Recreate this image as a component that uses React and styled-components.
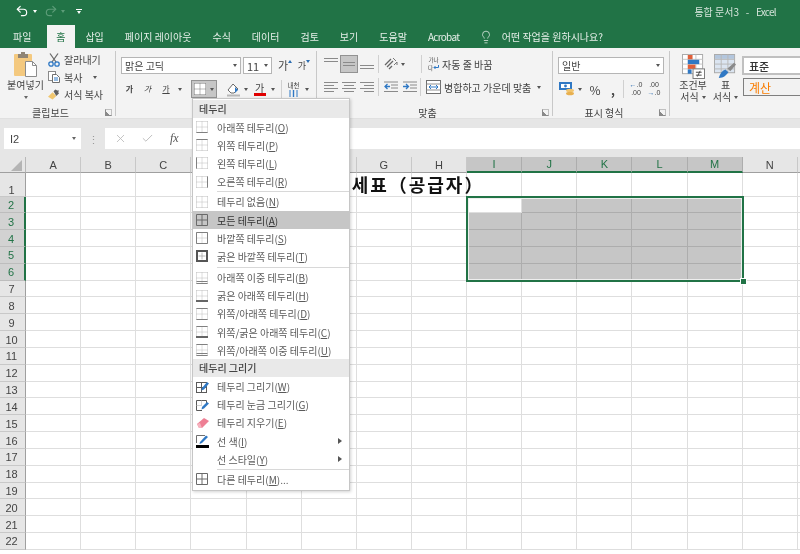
import React from "react";
import styled, { createGlobalStyle } from "styled-components";
import { Undo2, Redo2, Lightbulb, X, Check } from "lucide-react";

const GREEN = "#217346";
const KR = `"Noto Sans CJK KR", "Noto Sans", sans-serif`;

const Global = createGlobalStyle`
  html, body { margin: 0; padding: 0; background: #fff; }
  * { box-sizing: border-box; }
`;

const Page = styled.div`
  position: relative;
  width: 800px;
  height: 554px;
  overflow: hidden;
  display: flex;
  flex-direction: column;
  font-family: ${KR};
  font-size: 10px;
  color: #444;
  background: #e6e6e6;
  filter: blur(0.35px);
`;

/* title bar */
const TitleBar = styled.div`
  height: 25px;
  flex: none;
  background: ${GREEN};
  display: flex;
  align-items: center;
  padding: 0 24px 3px 15px;
  color: #d5e4da;
`;
const Qat = styled.div`
  display: flex;
  align-items: center;
  color: ${(p) => (p.$faded ? "#5c9c78" : "#fff")};
  margin-left: ${(p) => p.$ml || 0}px;
`;
const Caret = styled.span`
  display: inline-block;
  flex: none;
  width: 0;
  height: 0;
  margin-left: ${(p) => p.$ml || 0}px;
  margin-top: ${(p) => p.$mt || 0}px;
  border-left: 2.5px solid transparent;
  border-right: 2.5px solid transparent;
  border-top: 3px solid ${(p) => p.$color || "#555"};
`;
const Customize = styled.span`
  display: flex;
  flex-direction: column;
  align-items: center;
  gap: 1px;
  &::before {
    content: "";
    width: 6px;
    height: 1px;
    background: #fff;
  }
`;
const DocTitle = styled.div`
  margin-left: auto;
  white-space: pre;
`;
const Latin = styled.span`
  letter-spacing: -0.7px;
`;

/* tabs */
const TabBar = styled.div`
  height: 23px;
  flex: none;
  background: ${GREEN};
  display: flex;
  padding-left: 2.5px;
  color: #e6efe9;
`;
const Tab = styled.div`
  height: 23px;
  line-height: 23px;
  padding: 0 ${(p) => (p.$active ? 9.4 : 10.5)}px;
  margin-left: ${(p) => p.$ml || 0}px;
  white-space: nowrap;
  background: ${(p) => (p.$active ? "#f3f3f3" : "transparent")};
  color: ${(p) => (p.$active ? GREEN : "inherit")};
`;
const TellMe = styled.div`
  display: flex;
  align-items: center;
  gap: 9px;
  margin-left: 9px;
`;

/* ribbon */
const Ribbon = styled.div`
  height: 71px;
  flex: none;
  background: #f3f3f3;
  display: flex;
  padding-top: 3px;
  border-bottom: 1px solid #e0e0e0;
`;
const Group = styled.section`
  width: ${(p) => p.$w}px;
  height: 65px;
  flex: none;
  display: flex;
  flex-direction: column;
  border-right: ${(p) => (p.$last ? "none" : "1px solid #c8c8c8")};
`;
const GroupBody = styled.div`
  flex: 1;
  min-height: 0;
  display: ${(p) => (p.$row ? "flex" : "block")};
  padding: ${(p) => p.$pad || "6px 0 0 5px"};
`;
const GroupFoot = styled.div`
  display: flex;
  align-items: center;
  height: 14px;
  margin-bottom: -3px;
  flex: none;
`;
const GroupLabel = styled.div`
  flex: 1;
  text-align: center;
  white-space: nowrap;
`;
const Launcher = styled.span`
  width: 7px;
  height: 7px;
  margin: 1px 3px 0 4px;
  flex: none;
  border-left: 1px solid #8a8a8a;
  border-bottom: 1px solid #8a8a8a;
  border-top: 1px solid #c0c0c0;
  border-right: 1px solid #c0c0c0;
  background: linear-gradient(45deg, #8a8a8a 0 35%, transparent 35%);
`;
const Row = styled.div`
  display: flex;
  align-items: center;
  height: ${(p) => p.$h || 18}px;
  margin-top: ${(p) => p.$mt || 0}px;
`;
const Btn = styled.div`
  flex: none;
  display: flex;
  align-items: center;
  justify-content: center;
  height: 18px;
  width: ${(p) => p.$w}px;
  margin-left: ${(p) => p.$ml || 0}px;
  ${(p) => p.$on && `background: #c6c6c6; border: 1px solid #929292;`}
`;
const TextBtn = styled(Btn)`
  justify-content: flex-start;
  white-space: nowrap;
`;
const SymbolBtn = styled(Btn)`
  font-size: 12px;
  font-weight: ${(p) => (p.$bold ? 700 : 400)};
`;
const Sep = styled.span`
  flex: none;
  width: 1px;
  height: 18px;
  background: #d0d0d0;
  margin: 0 ${(p) => p.$r ?? p.$m ?? 3}px 0 ${(p) => p.$m ?? 3}px;
`;
const Select = styled.div`
  flex: none;
  width: ${(p) => p.$w}px;
  height: 17px;
  margin-left: ${(p) => p.$ml || 0}px;
  padding: 0 3px;
  display: flex;
  align-items: center;
  justify-content: space-between;
  background: #fff;
  border: 1px solid #b5b5b5;
  font-size: ${(p) => p.$size || 10}px;
`;
const Glyph = styled.span`
  font-size: ${(p) => p.$size || 8}px;
  font-weight: ${(p) => (p.$bold ? 700 : 400)};
  font-style: ${(p) => (p.$italic ? "italic" : "normal")};
  text-decoration: ${(p) => (p.$under ? "underline" : "none")};
  line-height: 1;
`;
const Tri = styled.span`
  align-self: flex-start;
  margin: 3px 0 0 0;
  width: 0;
  height: 0;
  border-left: 2px solid transparent;
  border-right: 2px solid transparent;
  ${(p) =>
    p.$down
      ? `border-top: 3px solid #2b6cb0;`
      : `border-bottom: 3px solid #2b6cb0;`}
`;
const FontColor = styled.span`
  display: flex;
  flex-direction: column;
  align-items: center;
  font-size: 10px;
  line-height: 11px;
  &::after {
    content: "";
    width: 12px;
    height: 3px;
    background: #e00000;
  }
`;
const Stack = styled.span`
  display: flex;
  flex-direction: column;
  align-items: center;
  font-size: ${(p) => p.$size || 7}px;
  line-height: ${(p) => p.$line || 8}px;
  white-space: nowrap;
`;
const Decimals = styled(Stack)`
  font-family: "Liberation Sans", sans-serif;
`;
const Blue = styled.span`
  color: #2b6cb0;
`;

/* clipboard */
const Paste = styled.div`
  width: 45px;
  flex: none;
  display: flex;
  flex-direction: column;
  align-items: center;
`;
const PasteLabel = styled.div`
  margin-top: 1px;
  line-height: 12px;
  white-space: nowrap;
`;
const ClipList = styled.div`
  display: flex;
  flex-direction: column;
`;
const ClipItem = styled.div`
  display: flex;
  align-items: center;
  height: 17.5px;
  gap: 4px;
  white-space: nowrap;
`;
const ClipIcon = styled.span`
  display: flex;
  width: 12px;
  justify-content: center;
`;

/* styles group */
const StyleTool = styled.div`
  width: ${(p) => p.$w}px;
  flex: none;
  display: flex;
  flex-direction: column;
  align-items: center;
  line-height: 12px;
  white-space: nowrap;
`;
const StyleIcon = styled.span`
  display: flex;
  height: 25px;
`;
const StyleLabel = styled.div`
  text-align: center;
  display: flex;
  align-items: center;
  gap: 3px;
`;
const Gallery = styled.div`
  flex: 1;
  display: flex;
  flex-direction: column;
  gap: 3px;
  padding-top: 2px;
`;
const StyleCell = styled.div`
  height: ${(p) => (p.$calc ? 18 : 19)}px;
  padding-left: 5px;
  display: flex;
  align-items: center;
  background: ${(p) => (p.$calc ? "#f2f2f2" : "#fff")};
  color: ${(p) => (p.$calc ? "#fa7d00" : "#333")};
  font-size: ${(p) => (p.$calc ? 12 : 11)}px;
  font-weight: ${(p) => (p.$calc ? 400 : 500)};
  border: ${(p) => (p.$calc ? "1px solid #7f7f7f" : "2px solid #c0c0c0")};
  border-right: none;
  margin-left: ${(p) => (p.$calc ? 1 : 0)}px;
`;

/* formula bar */
const Strip = styled.div`
  height: ${(p) => p.$h}px;
  flex: none;
`;
const FormulaBar = styled.div`
  height: 21px;
  flex: none;
  display: flex;
  padding-left: 4px;
`;
const NameBox = styled.div`
  width: 77px;
  flex: none;
  display: flex;
  align-items: center;
  justify-content: space-between;
  padding: 0 5px 0 6px;
  background: #fff;
  font: 11px "Liberation Sans", sans-serif;
  color: #444;
`;
const Grip = styled.div`
  width: 24px;
  flex: none;
  display: flex;
  justify-content: center;
  align-items: center;
  color: #9a9a9a;
  font-size: 11px;
`;
const FormulaInput = styled.div`
  flex: 1;
  display: flex;
  align-items: center;
  background: #fff;
  padding-left: 9px;
  gap: 14px;
  color: #bcbcbc;
`;
const Fx = styled.span`
  font: italic 12px "Liberation Serif", serif;
  color: #555;
  margin-left: 2px;
`;

/* sheet */
const Sheet = styled.div`
  position: relative;
  flex: 1;
  min-height: 0;
  overflow: hidden;
  background: #fff;
  display: grid;
  grid-template-columns: 26px repeat(15, 55.14px);
  grid-template-rows: 16px 23.5px repeat(22, 16.83px);
  font: 11px "Liberation Sans", sans-serif;
`;
const Corner = styled.div`
  background: #e6e6e6;
  border-right: 1px solid #b8b8b8;
  border-bottom: 1px solid #9f9f9f;
  display: flex;
  justify-content: flex-end;
  align-items: flex-end;
  padding: 0 2px 1px 0;
`;
const ColHead = styled.div`
  display: flex;
  align-items: center;
  justify-content: center;
  background: ${(p) => (p.$on ? "#c6c6c6" : "#e6e6e6")};
  color: ${(p) => (p.$on ? GREEN : "#444")};
  border-right: 1px solid ${(p) => (p.$on ? "#adadad" : "#c8c8c8")};
  border-bottom: ${(p) => (p.$on ? `2px solid ${GREEN}` : "1px solid #9f9f9f")};
`;
const RowHead = styled.div`
  display: flex;
  align-items: ${(p) => (p.$tall ? "flex-end" : "center")};
  justify-content: center;
  background: ${(p) => (p.$on ? "#d2d2d2" : "#e6e6e6")};
  color: ${(p) => (p.$on ? GREEN : "#444")};
  border-right: ${(p) => (p.$on ? `2px solid ${GREEN}` : "1px solid #9f9f9f")};
  border-bottom: 1px solid ${(p) => (p.$on ? "#bdbdbd" : "#c8c8c8")};
  padding: 1px 2px 0 0;
`;
const Cell = styled.div`
  background: ${(p) => (p.$on ? "#c6c6c6" : "#fff")};
  border-right: 1px solid ${(p) => (p.$on ? "#adadad" : "#dedede")};
  border-bottom: 1px solid ${(p) => (p.$on ? "#adadad" : "#dedede")};
`;
const Selection = styled.div`
  position: absolute;
  grid-column: 10 / 15;
  grid-row: 3 / 8;
  inset: -1px -1px -1px -1px;
  border: 2px solid ${GREEN};
  box-shadow: inset 0 0 0 1px #eee;
  pointer-events: none;
`;
const FillHandle = styled.span`
  position: absolute;
  right: -4px;
  bottom: -4px;
  width: 5px;
  height: 5px;
  background: ${GREEN};
  outline: 1px solid #fff;
`;
const SheetTitle = styled.div`
  position: absolute;
  grid-column: 7 / 11;
  grid-row: 2;
  left: 50px;
  top: 0;
  white-space: nowrap;
  font: 700 18px/22px ${KR};
  letter-spacing: 2px;
  color: #111;
`;

/* border dropdown */
const Menu = styled.div`
  position: absolute;
  left: 192px;
  top: 98px;
  width: 158px;
  height: 393px;
  padding-top: 1px;
  background: #fff;
  border: 1px solid #c6c6c6;
  box-shadow: 1px 1px 3px rgba(0, 0, 0, 0.18);
  color: #5a5a5a;
`;
const MenuHeader = styled.div`
  height: 18px;
  line-height: 17px;
  padding-left: 6px;
  background: #e9e9e9;
  font-weight: 500;
  color: #444;
`;
const MenuItem = styled.div`
  height: 18.2px;
  display: flex;
  align-items: center;
  background: ${(p) => (p.$on ? "#c6c6c6" : "transparent")};
  color: ${(p) => (p.$on ? "#333" : "inherit")};
  white-space: nowrap;
`;
const MenuIcon = styled.span`
  width: 24px;
  flex: none;
  display: flex;
  padding-left: 3px;
`;
const MenuText = styled.span`
  flex: 1;
`;
const SubArrow = styled.span`
  margin-right: 7px;
  width: 0;
  height: 0;
  border-top: 3px solid transparent;
  border-bottom: 3px solid transparent;
  border-left: 4px solid #555;
`;
const MenuRule = styled.div`
  height: ${(p) => p.$h}px;
  margin-left: 24px;
  display: flex;
  align-items: center;
  &::after {
    content: "";
    flex: 1;
    height: 1px;
    background: #d8d8d8;
  }
`;

/* icons */
const solidLines = {
  bottom: [[0.5, 11.5, 11.5, 11.5]],
  top: [[0.5, 0.5, 11.5, 0.5]],
  left: [[0.5, 0.5, 0.5, 11.5]],
  right: [[11.5, 0.5, 11.5, 11.5]],
  none: [],
  outside: [
    [0.5, 0.5, 11.5, 0.5],
    [0.5, 11.5, 11.5, 11.5],
    [0.5, 0.5, 0.5, 11.5],
    [11.5, 0.5, 11.5, 11.5],
  ],
  doubleBottom: [
    [0.5, 9.5, 11.5, 9.5],
    [0.5, 11.5, 11.5, 11.5],
  ],
  topBottom: [
    [0.5, 0.5, 11.5, 0.5],
    [0.5, 11.5, 11.5, 11.5],
  ],
  topDouble: [
    [0.5, 0.5, 11.5, 0.5],
    [0.5, 9.5, 11.5, 9.5],
    [0.5, 11.5, 11.5, 11.5],
  ],
};

const BorderIcon = ({ kind, filled }) => {
  const all = kind === "all";
  const thick = kind === "thick";
  const thickBottom = kind === "thickBottom" || kind === "topThick";
  const dots = ["M.5 .5H11.5", "M.5 6H11.5", "M.5 11.5H11.5", "M.5 .5V11.5", "M6 .5V11.5", "M11.5 .5V11.5"];
  return (
    <svg width="12" height="12" viewBox="0 0 12 12" fill="none">
      {filled && <rect width="12" height="12" fill="#fff" />}
      {!all && dots.map((d) => <path key={d} d={d} stroke={filled ? "#777" : "#bdbdbd"} strokeDasharray="1 1" />)}
      {all && dots.map((d) => <path key={d} d={d} stroke="#6a6a6a" />)}
      {(solidLines[kind] || []).map((l) => (
        <line key={l.join()} x1={l[0]} y1={l[1]} x2={l[2]} y2={l[3]} stroke="#808080" />
      ))}
      {thick && <rect x="1" y="1" width="10" height="10" stroke="#555" strokeWidth="2" />}
      {kind === "thick" && <path d="M6 3.5V8.5M3.5 6H8.5" stroke="#a6a6a6" strokeDasharray="1 1" />}
      {thickBottom && <path d="M0 11H12" stroke="#666" strokeWidth="2" />}
      {kind === "topThick" && <path d="M.5 .5H11.5" stroke="#808080" />}
    </svg>
  );
};

const Lines = ({ rows }) => (
  <svg width="14" height="16" viewBox="0 0 14 16" fill="none">
    {rows.map(([y, x1, x2]) => (
      <path key={y} d={`M${x1} ${y}H${x2}`} stroke="#8a8a8a" />
    ))}
  </svg>
);

const PasteIcon = () => (
  <svg width="24" height="27" viewBox="0 0 24 27">
    <rect x="0" y="3" width="18" height="22" rx="1" fill="#f4c97f" />
    <path d="M4 3h3V1h4v2h3v4H4z" fill="#8f8474" />
    <path d="M11.5 10.5h7l4 4v11h-11z" fill="#fff" stroke="#8c8c8c" />
    <path d="M18.5 10.5v4h4" fill="none" stroke="#8c8c8c" />
  </svg>
);
const ScissorsIcon = () => (
  <svg width="12" height="14" viewBox="0 0 12 14" fill="none">
    <path d="M2 .5L8 9M10 .5L4 9" stroke="#6b6b6b" strokeWidth="1.3" />
    <circle cx="3" cy="11" r="2.2" stroke="#2f78c4" strokeWidth="1.3" />
    <circle cx="9" cy="11" r="2.2" stroke="#2f78c4" strokeWidth="1.3" />
  </svg>
);
const CopyIcon = () => (
  <svg width="12" height="12" viewBox="0 0 12 12" fill="none">
    <rect x=".5" y=".5" width="7" height="9" fill="#fff" stroke="#8a8a8a" />
    <path d="M4.5 3.5h4l3 3v5h-7z" fill="#fff" stroke="#6f6f6f" />
    <path d="M6 7h4M6 9h4" stroke="#2f78c4" />
  </svg>
);
const PainterIcon = () => (
  <svg width="13" height="12" viewBox="0 0 13 12">
    <path d="M0 8L5 3l4 4-4 4z" fill="#f0c66e" />
    <path d="M6 2l2-2 2 1 2 0-1 2 1 1-3 3z" fill="#5f5f5f" />
  </svg>
);
const FillIcon = () => (
  <svg width="15" height="15" viewBox="0 0 15 15" fill="none">
    <path d="M2 8L7 2l5 5-4 4H5z" fill="#fff" stroke="#6b6b6b" />
    <path d="M9 5l3 3-3 3z" fill="#2f78c4" />
    <path d="M1 13.5H14" stroke="#b8b8b8" strokeWidth="2" />
  </svg>
);
const OrientIcon = () => (
  <svg width="14" height="14" viewBox="0 0 14 14" fill="none">
    <path d="M1 8L7 2M3 10L9 4M5 12L8 9" stroke="#666" strokeWidth="1.3" />
    <path d="M9 1l3 3M10 8l3-3M13 5v3" stroke="#777" />
  </svg>
);
const IndentIcon = ({ flip }) => (
  <svg width="14" height="12" viewBox="0 0 14 12" fill="none">
    <path d="M0 1H14M7 4H14M7 7H14M0 10.5H14" stroke="#8a8a8a" />
    {flip ? (
      <path d="M0 5.5H5M3 3L5.5 5.5L3 8" stroke="#2f78c4" strokeWidth="1.3" />
    ) : (
      <path d="M6 5.5H1M3.5 3L1 5.5L3.5 8" stroke="#2f78c4" strokeWidth="1.3" />
    )}
  </svg>
);
const MergeIcon = () => (
  <svg width="15" height="14" viewBox="0 0 15 14" fill="none">
    <rect x=".5" y=".5" width="14" height="13" fill="#fff" stroke="#6f6f6f" />
    <path d="M.5 4H14.5M.5 10H14.5" stroke="#8f8f8f" />
    <path d="M3 7H12M5 5L3 7L5 9M10 5L12 7L10 9" stroke="#2f78c4" />
  </svg>
);
const CurrencyIcon = () => (
  <svg width="16" height="14" viewBox="0 0 16 14">
    <rect x="0" y="0" width="13" height="8" fill="#2f78c4" />
    <rect x="2" y="2" width="9" height="4" fill="#fff" />
    <circle cx="6.5" cy="4" r="1.4" fill="#2f78c4" />
    <ellipse cx="11" cy="8.5" rx="4" ry="1.8" fill="#f2c46d" />
    <ellipse cx="11" cy="11.5" rx="4" ry="1.8" fill="#e8b04f" />
  </svg>
);
const WrapArrow = () => (
  <svg width="6" height="5" viewBox="0 0 6 5" fill="none">
    <path d="M5.5 0V2.5H1M2.5 1L1 2.5L2.5 4" stroke="#2f78c4" />
  </svg>
);
const IndentColumns = () => (
  <svg width="9" height="7" viewBox="0 0 9 7" fill="none">
    <path d="M1 0V7M8 0V7" stroke="#2f78c4" />
    <path d="M4.5 0V7" stroke="#2f78c4" strokeWidth="1.4" />
  </svg>
);
const CondFormatIcon = () => (
  <svg width="23" height="25" viewBox="0 0 24 26" fill="none">
    <rect x=".5" y=".5" width="21" height="20" fill="#fff" stroke="#a8a8a8" />
    <path d="M.5 5.5H21.5M.5 10.5H21.5M.5 15.5H21.5M7.500 .5V20.5M14.500 .5V20.5" stroke="#c4c4c4" />
    <rect x="6" y="1" width="5" height="4.5" fill="#e0603a" />
    <rect x="6" y="6" width="12" height="4.5" fill="#2f78c4" />
    <rect x="6" y="11" width="8" height="4.5" fill="#e0603a" />
    <rect x="6" y="16" width="4" height="4.5" fill="#2f78c4" />
    <rect x="11.5" y="15.5" width="12" height="10" fill="#fff" stroke="#777" />
    <path d="M14.5 19H20.5M14.5 22H20.5M19 17.5L16 23.5" stroke="#444" />
  </svg>
);
const TableFormatIcon = () => (
  <svg width="23" height="25" viewBox="0 0 24 26" fill="none">
    <rect x=".5" y=".5" width="21" height="19" fill="#dbe5f1" stroke="#a8a8a8" />
    <rect x="1" y="1" width="20" height="4" fill="#b3c6dd" />
    <path d="M.5 5.5H21.5M.5 10.5H21.5M.5 15.5H21.5M7.5 .5V20M14.5 .5V20" stroke="#b8b8b8" />
    <path d="M5 25c1-5 4-8 7-9l3 3c-2 3-5 6-10 6z" fill="#2f78c4" />
    <path d="M14 15l7-6 2 2-6 7z" fill="#8a8a8a" />
  </svg>
);
const PenGridIcon = () => (
  <svg width="14" height="14" viewBox="0 0 14 14" fill="none">
    <rect x=".5" y="2.5" width="10" height="10" stroke="#5a5a5a" />
    <path d="M.5 7.5H10.5M5.5 2.5V12.5" stroke="#5a5a5a" />
    <path d="M6 8L11 2l2 1.5-5 6-2.5 1z" fill="#2f78c4" />
  </svg>
);
const PenDashIcon = () => (
  <svg width="14" height="14" viewBox="0 0 14 14" fill="none">
    <path d="M.5 2.5H10.5V7M.5 2.5V12.5H6" stroke="#5a5a5a" />
    <path d="M.5 7.5H6M5.5 2.5V7" stroke="#a6a6a6" strokeDasharray="1 1" />
    <path d="M6 9L11 4l2 1.5-5 5-2.5 1z" fill="#2f78c4" />
  </svg>
);
const EraserIcon = () => (
  <svg width="14" height="12" viewBox="0 0 14 12">
    <path d="M1 7L8 1l5 3-7 7H3z" fill="#ee7f94" />
    <path d="M1 7l2 4h3L4 6z" fill="#f6b3bf" />
  </svg>
);
const LineColorIcon = () => (
  <svg width="14" height="14" viewBox="0 0 14 14" fill="none">
    <path d="M.5 9V1.5H9" stroke="#6f6f6f" />
    <path d="M4 8L10 1.5l2 1.5-6 6-2.5 1z" fill="#2f78c4" />
    <rect x="0" y="11" width="13" height="3" fill="#000" />
  </svg>
);
const CornerTriangle = () => (
  <svg width="12" height="11" viewBox="0 0 12 11">
    <path d="M11 0V11H0z" fill="#b4b4b4" />
  </svg>
);

const MENU = [
  { header: "테두리" },
  { label: "아래쪽 테두리", key: "O", icon: "bottom" },
  { label: "위쪽 테두리", key: "P", icon: "top" },
  { label: "왼쪽 테두리", key: "L", icon: "left" },
  { label: "오른쪽 테두리", key: "R", icon: "right" },
  { rule: 2 },
  { label: "테두리 없음", key: "N", icon: "none" },
  { label: "모든 테두리", key: "A", icon: "all", on: true },
  { label: "바깥쪽 테두리", key: "S", icon: "outside" },
  { label: "굵은 바깥쪽 테두리", key: "T", icon: "thick" },
  { rule: 3 },
  { label: "아래쪽 이중 테두리", key: "B", icon: "doubleBottom" },
  { label: "굵은 아래쪽 테두리", key: "H", icon: "thickBottom" },
  { label: "위쪽/아래쪽 테두리", key: "D", icon: "topBottom" },
  { label: "위쪽/굵은 아래쪽 테두리", key: "C", icon: "topThick" },
  { label: "위쪽/아래쪽 이중 테두리", key: "U", icon: "topDouble" },
  { header: "테두리 그리기" },
  { label: "테두리 그리기", key: "W", draw: <PenGridIcon /> },
  { label: "테두리 눈금 그리기", key: "G", draw: <PenDashIcon /> },
  { label: "테두리 지우기", key: "E", draw: <EraserIcon /> },
  { label: "선 색", key: "I", draw: <LineColorIcon />, sub: true },
  { label: "선 스타일", key: "Y", sub: true },
  { rule: 2 },
  { label: "다른 테두리", key: "M", icon: "all", tail: "..." },
];

const COLS = "ABCDEFGHIJKLMNO".split("");
// columns whose letters the open menu or the window edge hides
const HIDDEN_LETTERS = ["D", "E", "F", "O"];
const ROWS = Array.from({ length: 22 }, (_, i) => i + 1);
const TABS = ["삽입", "페이지 레이아웃", "수식", "데이터", "검토", "보기", "도움말"];

const SheetGrid = () => (
  <Sheet>
    <Corner>
      <CornerTriangle />
    </Corner>
    {COLS.map((c, i) => (
      <ColHead key={c} $on={i >= 8 && i <= 12}>
        {!HIDDEN_LETTERS.includes(c) && c}
      </ColHead>
    ))}
    {ROWS.map((r) => (
      <React.Fragment key={r}>
        <RowHead $on={r >= 2 && r <= 6} $tall={r === 1}>
          {r}
        </RowHead>
        {COLS.map((c, i) => (
          <Cell key={c} $on={r >= 2 && r <= 6 && i >= 8 && i <= 12 && !(r === 2 && i === 8)} />
        ))}
      </React.Fragment>
    ))}
    <SheetTitle>세표（공급자）</SheetTitle>
    <Selection>
      <FillHandle />
    </Selection>
  </Sheet>
);

const BorderMenu = () => (
  <Menu>
    {MENU.map((m, i) => {
      if (m.header) return <MenuHeader key={i}>{m.header}</MenuHeader>;
      if (m.rule) return <MenuRule key={i} $h={m.rule} />;
      return (
        <MenuItem key={i} $on={m.on}>
          <MenuIcon>{m.draw || (m.icon && <BorderIcon kind={m.icon} />)}</MenuIcon>
          <MenuText>
            {m.label}(<u>{m.key}</u>){m.tail}
          </MenuText>
          {m.sub && <SubArrow />}
        </MenuItem>
      );
    })}
  </Menu>
);

const App = () => (
  <Page>
    <Global />
    <TitleBar>
      <Qat>
        <Undo2 size={14} strokeWidth={2} />
        <Caret $ml={4} $color="#fff" />
      </Qat>
      <Qat $faded $ml={7}>
        <Redo2 size={14} strokeWidth={2} />
        <Caret $ml={3} $color="#5c9c78" />
      </Qat>
      <Qat $ml={11}>
        <Customize>
          <Caret $color="#fff" />
        </Customize>
      </Qat>
      <DocTitle>
        통합 문서3   -   <Latin>Excel</Latin>
      </DocTitle>
    </TitleBar>

    <TabBar>
      <Tab>파일</Tab>
      <Tab $active $ml={5}>
        홈
      </Tab>
      {TABS.map((t) => (
        <Tab key={t}>{t}</Tab>
      ))}
      <Tab>
        <Latin>Acrobat</Latin>
      </Tab>
      <TellMe>
        <Lightbulb size={14} strokeWidth={1.3} color="#e6efe9" />
        어떤 작업을 원하시나요?
      </TellMe>
    </TabBar>

    <Ribbon>
      <Group $w={116}>
        <GroupBody $row $pad="0 0 0 3px">
          <Paste>
            <PasteIcon />
            <PasteLabel>붙여넣기</PasteLabel>
            <Caret $color="#666" $mt={5} />
          </Paste>
          <ClipList>
            <ClipItem>
              <ClipIcon>
                <ScissorsIcon />
              </ClipIcon>
              잘라내기
            </ClipItem>
            <ClipItem>
              <ClipIcon>
                <CopyIcon />
              </ClipIcon>
              복사
              <Caret $ml={7} />
            </ClipItem>
            <ClipItem>
              <ClipIcon>
                <PainterIcon />
              </ClipIcon>
              서식 복사
            </ClipItem>
          </ClipList>
        </GroupBody>
        <GroupFoot>
          <GroupLabel>클립보드</GroupLabel>
          <Launcher />
        </GroupFoot>
      </Group>

      <Group $w={201}>
        <GroupBody>
          <Row $h={17}>
            <Select $w={120}>
              맑은 고딕
              <Caret />
            </Select>
            <Select $w={29} $ml={2} $size={11}>
              11
              <Caret />
            </Select>
            <Btn $w={16} $ml={5}>
              <Glyph $size={11}>가</Glyph>
              <Tri />
            </Btn>
            <Btn $w={16} $ml={3}>
              <Glyph $size={9}>가</Glyph>
              <Tri $down />
            </Btn>
          </Row>
          <Row $mt={6}>
            <Btn $w={17}>
              <Glyph $bold>가</Glyph>
            </Btn>
            <Btn $w={19}>
              <Glyph $italic>가</Glyph>
            </Btn>
            <Btn $w={18}>
              <Glyph $under>가</Glyph>
            </Btn>
            <Btn $w={9}>
              <Caret />
            </Btn>
            <Btn $w={26} $ml={7} $on>
              <BorderIcon kind="none" filled />
              <Caret $ml={4} />
            </Btn>
            <Btn $w={16} $ml={8}>
              <FillIcon />
            </Btn>
            <Btn $w={9}>
              <Caret />
            </Btn>
            <Btn $w={17} $ml={1}>
              <FontColor>가</FontColor>
            </Btn>
            <Btn $w={9}>
              <Caret />
            </Btn>
            <Sep $m={4} $r={3} />
            <Btn $w={17}>
              <Stack $size={6.5} $line={9}>
                내천
                <IndentColumns />
              </Stack>
            </Btn>
            <Btn $w={9}>
              <Caret />
            </Btn>
          </Row>
        </GroupBody>
        <GroupFoot>
          <GroupLabel />
        </GroupFoot>
      </Group>

      <Group $w={236}>
        <GroupBody $pad="4px 0 0 5px">
          <Row>
            <Btn $w={18}>
              <Lines rows={[[2.5, 0, 14], [5.5, 0, 14]]} />
            </Btn>
            <Btn $w={18} $on>
              <Lines rows={[[6.5, 1, 13], [9.5, 1, 13]]} />
            </Btn>
            <Btn $w={18}>
              <Lines rows={[[9.5, 0, 14], [12.5, 0, 14]]} />
            </Btn>
            <Sep $m={2} />
            <Btn $w={15} $ml={2}>
              <OrientIcon />
            </Btn>
            <Btn $w={9}>
              <Caret />
            </Btn>
            <Sep $m={14} $r={3} />
            <Btn $w={17}>
              <Stack $size={5.5} $line={8}>
                가나
                <span>
                  다<WrapArrow />
                </span>
              </Stack>
            </Btn>
            <TextBtn $w={56}>자동 줄 바꿈</TextBtn>
          </Row>
          <Row $mt={5}>
            <Btn $w={18}>
              <Lines rows={[[3.5, 0, 14], [6.5, 0, 10], [9.5, 0, 14], [12.5, 0, 10]]} />
            </Btn>
            <Btn $w={18}>
              <Lines rows={[[3.5, 0, 14], [6.5, 2, 12], [9.5, 0, 14], [12.5, 2, 12]]} />
            </Btn>
            <Btn $w={18}>
              <Lines rows={[[3.5, 0, 14], [6.5, 4, 14], [9.5, 0, 14], [12.5, 4, 14]]} />
            </Btn>
            <Sep $m={2} />
            <Btn $w={18} $ml={1}>
              <IndentIcon />
            </Btn>
            <Btn $w={19}>
              <IndentIcon flip />
            </Btn>
            <Sep $m={1} />
            <Btn $w={21} $ml={1}>
              <MergeIcon />
            </Btn>
            <TextBtn $w={90}>병합하고 가운데 맞춤</TextBtn>
            <Caret $ml={3} />
          </Row>
        </GroupBody>
        <GroupFoot>
          <GroupLabel>맞춤</GroupLabel>
          <Launcher />
        </GroupFoot>
      </Group>

      <Group $w={117}>
        <GroupBody>
          <Row $h={17}>
            <Select $w={106}>
              일반
              <Caret />
            </Select>
          </Row>
          <Row $mt={6}>
            <Btn $w={18}>
              <CurrencyIcon />
            </Btn>
            <Btn $w={8}>
              <Caret />
            </Btn>
            <SymbolBtn $w={22}>%</SymbolBtn>
            <SymbolBtn $w={14} $bold>
              ,
            </SymbolBtn>
            <Sep $m={3} />
            <Btn $w={18}>
              <Decimals>
                <span>
                  <Blue>←</Blue>.0
                </span>
                .00
              </Decimals>
            </Btn>
            <Btn $w={18}>
              <Decimals>
                .00
                <span>
                  <Blue>→</Blue>.0
                </span>
              </Decimals>
            </Btn>
          </Row>
        </GroupBody>
        <GroupFoot>
          <GroupLabel>표시 형식</GroupLabel>
          <Launcher />
        </GroupFoot>
      </Group>

      <Group $w={130} $last>
        <GroupBody $row $pad="3px 0 0 7px">
          <StyleTool $w={32}>
            <StyleIcon>
              <CondFormatIcon />
            </StyleIcon>
            <StyleLabel>조건부</StyleLabel>
            <StyleLabel>
              서식
              <Caret />
            </StyleLabel>
          </StyleTool>
          <StyleTool $w={33}>
            <StyleIcon>
              <TableFormatIcon />
            </StyleIcon>
            <StyleLabel>표</StyleLabel>
            <StyleLabel>
              서식
              <Caret />
            </StyleLabel>
          </StyleTool>
          <Gallery>
            <StyleCell>표준</StyleCell>
            <StyleCell $calc>계산</StyleCell>
          </Gallery>
        </GroupBody>
      </Group>
    </Ribbon>

    <Strip $h={9} />
    <FormulaBar>
      <NameBox>
        I2
        <Caret $color="#666" />
      </NameBox>
      <Grip>⋮</Grip>
      <FormulaInput>
        <X size={13} strokeWidth={1.6} />
        <Check size={13} strokeWidth={1.8} />
        <Fx>fx</Fx>
      </FormulaInput>
    </FormulaBar>
    <Strip $h={8} />

    <SheetGrid />
    <BorderMenu />
  </Page>
);

export default App;
